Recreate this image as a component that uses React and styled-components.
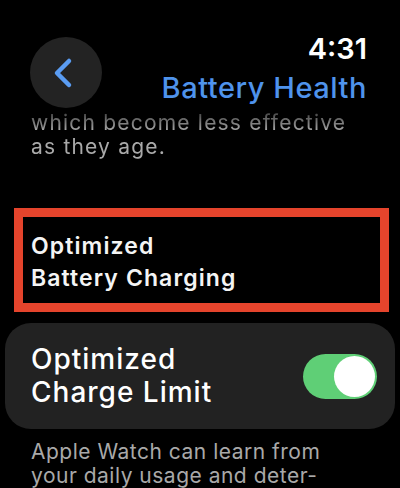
import React from 'react';
import styled, { createGlobalStyle } from 'styled-components';

const Global = createGlobalStyle`
  html, body {
    margin: 0;
    padding: 0;
    background: #000;
  }
  body {
    font-family: Inter, "Noto Sans", sans-serif;
    -webkit-font-smoothing: antialiased;
  }
`

const Screen = styled.div`
  width: 400px;
  height: 488px;
  overflow: hidden;
  background: #000;
  display: flex;
  flex-direction: column;
`

const Header = styled.div`
  display: flex;
  justify-content: space-between;
  align-items: flex-start;
  padding: 29px 33px 0 30px;
`

const BackButton = styled.div`
  width: 72px;
  height: 71px;
  margin-top: 8px;
  border-radius: 50%;
  background: #232323;
  display: flex;
  align-items: center;
  justify-content: center;
  padding-right: 6px;
  box-sizing: border-box;
`

const TitleBlock = styled.div`
  text-align: right;
`

const Time = styled.div`
  color: #fff;
  font-size: 29px;
  font-weight: 600;
  line-height: 39px;
`

const Title = styled.div`
  color: #4f93ec;
  font-size: 29px;
  font-weight: 500;
  line-height: 39px;
  letter-spacing: 0.55px;
`

const Note = styled.p`
  margin: ${props => props.top || 0}px 0 0;
  padding: 0 10px 0 31px;
  color: #a9a9a9;
  font-size: 21px;
  line-height: 24px;
  letter-spacing: ${props => (props.faded ? 1.2 : 0.5)}px;
  ${props => props.faded && `
    -webkit-mask-image: linear-gradient(to bottom, rgba(0,0,0,0.35) 0px, #000 20px);
    mask-image: linear-gradient(to bottom, rgba(0,0,0,0.35) 0px, #000 20px);
  `}
`

const Highlight = styled.div`
  margin: 49px 11px 0 14px;
  border: 9px solid #e5442c;
  padding: 13px 8px 9px;
  color: #f4f4f4;
  font-size: 23px;
  font-weight: 600;
  line-height: 32px;
  letter-spacing: 1.1px;
`

const Card = styled.div`
  margin: 11px 5px 0;
  height: 109px;
  box-sizing: border-box;
  border-radius: 26px;
  background: #222;
  display: flex;
  align-items: center;
  justify-content: space-between;
  padding: 0 18px 0 26px;
`

const CardLabel = styled.div`
  color: #fff;
  font-size: 28px;
  font-weight: 500;
  line-height: 33px;
  letter-spacing: 1px;
`

const Toggle = styled.div`
  width: 74px;
  height: 45px;
  border-radius: 23px;
  background: ${props => (props.on ? '#5fcf76' : '#3a3a3a')};
  display: flex;
  align-items: center;
  justify-content: ${props => (props.on ? 'flex-end' : 'flex-start')};
  padding: 2px;
  box-sizing: border-box;
`

const Knob = styled.div`
  width: 41px;
  height: 41px;
  border-radius: 50%;
  background: #fff;
`

export default function App() {
  return (
    <Screen>
      <Global />
      <Header>
        <BackButton>
          <svg width="22" height="32" viewBox="0 0 22 32">
            <polyline points="17,4 5,16 17,28" fill="none" stroke="#5a9cf2" strokeWidth="4.5" strokeLinecap="round" strokeLinejoin="round" />
          </svg>
        </BackButton>
        <TitleBlock>
          <Time>4:31</Time>
          <Title>Battery Health</Title>
        </TitleBlock>
      </Header>
      <Note top={3} faded>
        which become less effective<br />as they age.
      </Note>
      <Highlight>
        Optimized<br />Battery Charging
      </Highlight>
      <Card>
        <CardLabel>Optimized<br />Charge Limit</CardLabel>
        <Toggle on>
          <Knob />
        </Toggle>
      </Card>
      <Note top={11}>
        Apple Watch can learn from<br />your daily usage and deter-
      </Note>
    </Screen>
  );
}
